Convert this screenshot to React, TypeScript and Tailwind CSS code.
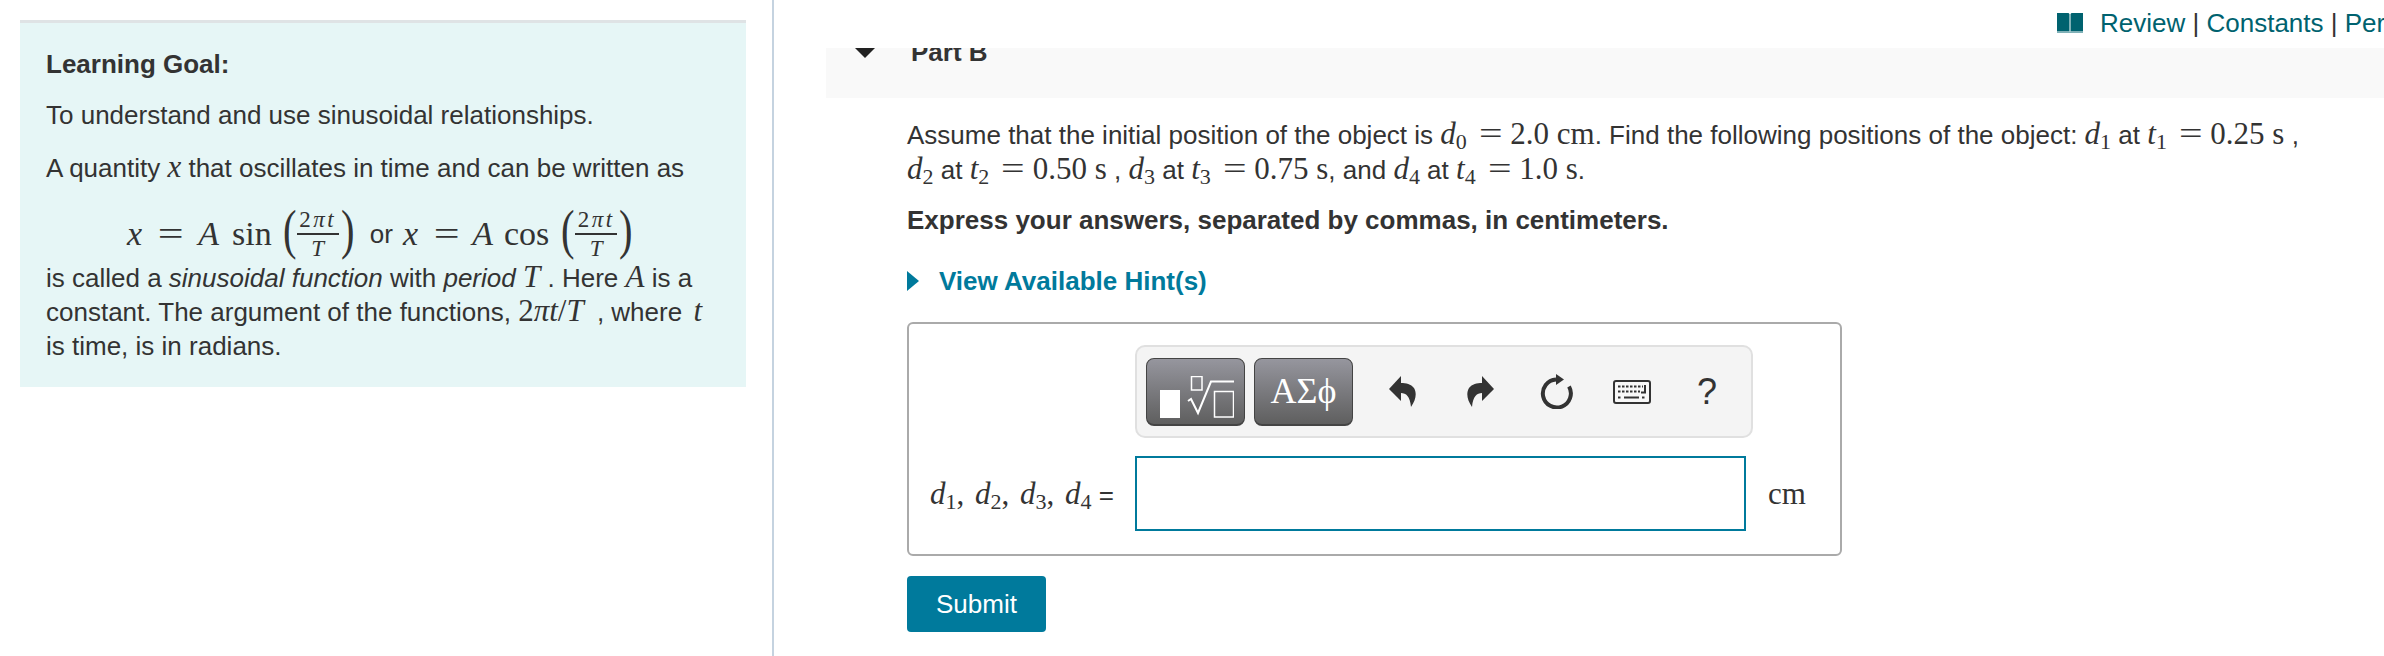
import React from 'react';

const serif = "font-['Liberation_Serif',serif]";

const V: React.FC<{ children: React.ReactNode }> = ({ children }) => (
    <i className={`${serif} text-[31px] leading-none`}>{children}</i>
);

const M: React.FC<{ children: React.ReactNode }> = ({ children }) => (
    <span className={`${serif} text-[31px] leading-none`}>{children}</span>
);

const Eq = () => <span className={`${serif} inline-block scale-x-[1.35] text-[31px] leading-none ml-[15px] mr-[11px]`}>=</span>;

const Sub: React.FC<{ base: string; n: string }> = ({ base, n }) => (
    <span className={`${serif} whitespace-nowrap leading-none`}>
        <i className="text-[31px]">{base}</i>
        <span className="text-[22px] align-[-5px] leading-none">{n}</span>
    </span>
);

const Frac: React.FC = () => (
    <span className={`${serif} inline-flex flex-col items-center w-[42px] shrink-0 leading-none`}>
        <span className="text-[23px] tracking-[2.5px] leading-[27px] border-b-2 border-[#333] w-full text-center">
            2<i>πt</i>
        </span>
        <i className="text-[23px] leading-[27px]">T</i>
    </span>
);

const Paren: React.FC<{ c: string }> = ({ c }) => (
    <span className={`${serif} text-[54px] leading-none inline-block scale-x-75 -mt-2 w-[16px] shrink-0 text-center`}>{c}</span>
);

const BigM: React.FC<{ className?: string; children: React.ReactNode }> = ({ className, children }) => (
    <span className={`${serif} text-[34px] leading-none ${className ?? ''}`}>{children}</span>
);

const BookIcon = () => (
    <svg width="26" height="20" viewBox="0 0 26 20" className="shrink-0">
        <path d="M0 0h11.500l1 1V18.500H0z" fill="#00626f" />
        <path d="M26 0H14.500l-1 1V18.500H26z" fill="#00626f" />
        <path d="M0 18.500h26V20H0z" fill="#7fb0b7" />
    </svg>
);

const TemplatesIcon = () => (
    <svg width="74" height="42" viewBox="0 0 74 42" fill="none">
        <rect x="0" y="14" width="20" height="28" fill="#fff" />
        <rect x="31.500" y="0.500" width="10.500" height="13.500" stroke="#fff" strokeWidth="1.500" />
        <path d="M28 25l3-2 7 14L51 5.500h23" stroke="#fff" strokeWidth="2" />
        <rect x="54.500" y="15.500" width="19" height="25.500" stroke="#fff" strokeWidth="1.500" />
    </svg>
);

const UndoIcon = () => (
    <svg width="27" height="31" viewBox="0 0 27 31">
        <path d="M12 0L0 13l12 12v-8c5 0 9 3 10 14 5-7 6-14 3-19-3-4-8-5-13-5z" fill="#333" />
    </svg>
);

const RedoIcon = () => (
    <svg width="27" height="31" viewBox="0 0 27 31">
        <path d="M15 0l12 13-12 12v-8c-5 0-9 3-10 14-5-7-6-14-3-19 3-4 8-5 13-5z" fill="#333" />
    </svg>
);

const ResetIcon = () => (
    <svg width="33" height="35" viewBox="0 0 33 35" fill="none">
        <path d="M16 5.500A14 14 0 1 0 29 12.500" stroke="#333" strokeWidth="4" />
        <path d="M16 0l8 5.500-8 5.500z" fill="#333" />
    </svg>
);

const KeyboardIcon = () => (
    <svg width="38" height="24" viewBox="0 0 38 24" fill="none">
        <rect x="1" y="1" width="36" height="22" rx="2" stroke="#333" strokeWidth="2" fill="#f8f8f8" />
        <path d="M5 6.500h25M5 11.500h22M5 17.500h3M29 17.500h4" stroke="#333" strokeWidth="2" strokeDasharray="2.500 1.500" />
        <path d="M11 17.500h15M32 5v7.500h-4" stroke="#333" strokeWidth="2" />
    </svg>
);

const App: React.FC = () => {
    return (
        <div className="flex w-[2384px] h-[656px] overflow-hidden bg-white font-['Liberation_Sans',Arial,sans-serif] text-[26px] text-[#333]">
            <div className="w-[774px] shrink-0 border-r-2 border-[#c5d3e0] pt-5 pl-5 pr-[26px]">
                <div className="h-[367px] bg-[#e6f6f6] border-t-[3px] border-[#dfe3e5] pl-[26px] pr-[34px] pt-[23px]">
                    <p className="font-bold leading-[36px]">Learning Goal:</p>
                    <p className="leading-[36px] mt-[15px]">To understand and use sinusoidal relationships.</p>
                    <p className="leading-[36px] mt-[17px]">
                        A quantity <V>x</V> that oscillates in time and can be written as
                    </p>
                    <div className="flex items-center h-[64px] mt-[16px] pl-[81px] whitespace-nowrap">
                        <BigM><i>x</i></BigM>
                        <BigM className="inline-block scale-x-[1.35] ml-[19px]">=</BigM>
                        <BigM className="ml-[18px]"><i>A</i></BigM>
                        <BigM className="ml-[13px]">sin</BigM>
                        <span className="ml-[9px] flex items-center"><Paren c="(" /><Frac /><Paren c=")" /></span>
                        <span className="ml-[15px]">or</span>
                        <BigM className="ml-[10px]"><i>x</i></BigM>
                        <BigM className="inline-block scale-x-[1.35] ml-[19px]">=</BigM>
                        <BigM className="ml-[16px]"><i>A</i></BigM>
                        <BigM className="ml-[11px]">cos</BigM>
                        <span className="ml-[10px] flex items-center"><Paren c="(" /><Frac /><Paren c=")" /></span>
                    </div>
                    <p className="leading-[34px] -mt-[5px]">
                        is called a <em>sinusoidal function</em> with <em>period</em> <V>T</V> . Here <V>A</V> is a constant. The argument of the functions, <M>2</M><V>πt</V><M>/</M><V>T</V><span className="ml-[6px]"> , where</span> <span className="ml-[4px]"><V>t</V></span> is time, is in radians.
                    </p>
                </div>
            </div>
            <div className="flex-1 min-w-0">
                <div className="h-12 flex justify-end items-start pt-[5px] text-[#00626f] whitespace-nowrap overflow-hidden">
                    <div className="flex items-center w-[327px] shrink-0 leading-[36px]">
                        <BookIcon />
                        <span className="ml-[17px]">Review <span className="text-[#333]">|</span> Constants <span className="text-[#333]">|</span> Periodic Table</span>
                    </div>
                </div>
                <div className="ml-[52px] h-[50px] bg-[#f9f9f9] flex items-start overflow-hidden">
                    <div className="ml-[29px] w-0 h-0 border-x-[10px] border-x-transparent border-t-[10px] border-t-[#222]" />
                    <span className="ml-[36px] font-bold leading-[36px] -mt-[14px]">Part B</span>
                </div>
                <div className="pl-[133px]">
                    <p className="leading-[34px] mt-[20px] w-[1410px]">
                        Assume that the initial position of the object is <Sub base="d" n="0" /><Eq /><M>2.0 cm</M>. Find the following positions of the object: <Sub base="d" n="1" /> at <Sub base="t" n="1" /><Eq /><M>0.25 s</M> , <Sub base="d" n="2" /> at <Sub base="t" n="2" /><Eq /><M>0.50 s</M> , <Sub base="d" n="3" /> at <Sub base="t" n="3" /><Eq /><M>0.75 s</M>, and <Sub base="d" n="4" /> at <Sub base="t" n="4" /><Eq /><M>1.0 s</M>.
                    </p>
                    <p className="font-bold leading-[36px] mt-[14px]">Express your answers, separated by commas, in centimeters.</p>
                    <div className="flex items-center mt-[25px] text-[#007a9c] font-bold leading-[36px]">
                        <div className="w-0 h-0 border-y-[10px] border-y-transparent border-l-[12px] border-l-[#007a9c]" />
                        <span className="ml-[20px]">View Available Hint(s)</span>
                    </div>
                    <div className="w-[935px] h-[234px] mt-[23px] border-2 border-[#aaa] rounded-md pl-[21px] pr-[20px] pt-[21px]">
                        <div className="ml-[205px] w-[618px] h-[93px] bg-[#f4f4f4] border-2 border-[#e0e0e0] rounded-[10px] flex items-center pl-[9px]">
                            <div className="w-[99px] h-[68px] shrink-0 rounded-lg border border-[#444] border-b-2 bg-gradient-to-b from-[#96969e] to-[#5f5f5f] flex items-center justify-center pt-[12px] pl-[2px]">
                                <TemplatesIcon />
                            </div>
                            <div className={`${serif} ml-[9px] w-[99px] h-[68px] shrink-0 rounded-lg border border-[#444] border-b-2 bg-gradient-to-b from-[#96969e] to-[#5f5f5f] flex items-center justify-center text-white text-[36px] whitespace-nowrap`}>
                                ΑΣϕ
                            </div>
                            <div className="ml-[36px] flex"><UndoIcon /></div>
                            <div className="ml-[51px] flex"><RedoIcon /></div>
                            <div className="ml-[46px] flex"><ResetIcon /></div>
                            <div className="ml-[40px] flex"><KeyboardIcon /></div>
                            <div className="ml-[46px] text-[36px] font-normal leading-none">?</div>
                        </div>
                        <div className="flex items-center mt-[18px]">
                            <div className="w-[205px] whitespace-nowrap pt-[3px]">
                                <Sub base="d" n="1" /><span className="mr-[3px]"><M>, </M></span><Sub base="d" n="2" /><span className="mr-[3px]"><M>, </M></span><Sub base="d" n="3" /><span className="mr-[3px]"><M>, </M></span><Sub base="d" n="4" /> =
                            </div>
                            <div className="w-[611px] h-[75px] shrink-0 border-2 border-[#007a9c] bg-white" />
                            <span className="pt-[3px]"><M><span className="ml-[22px]">cm</span></M></span>
                        </div>
                    </div>
                    <button className="block mt-[20px] w-[139px] h-[56px] bg-[#007a9c] rounded text-white">Submit</button>
                </div>
            </div>
        </div>
    );
};

export default App;
